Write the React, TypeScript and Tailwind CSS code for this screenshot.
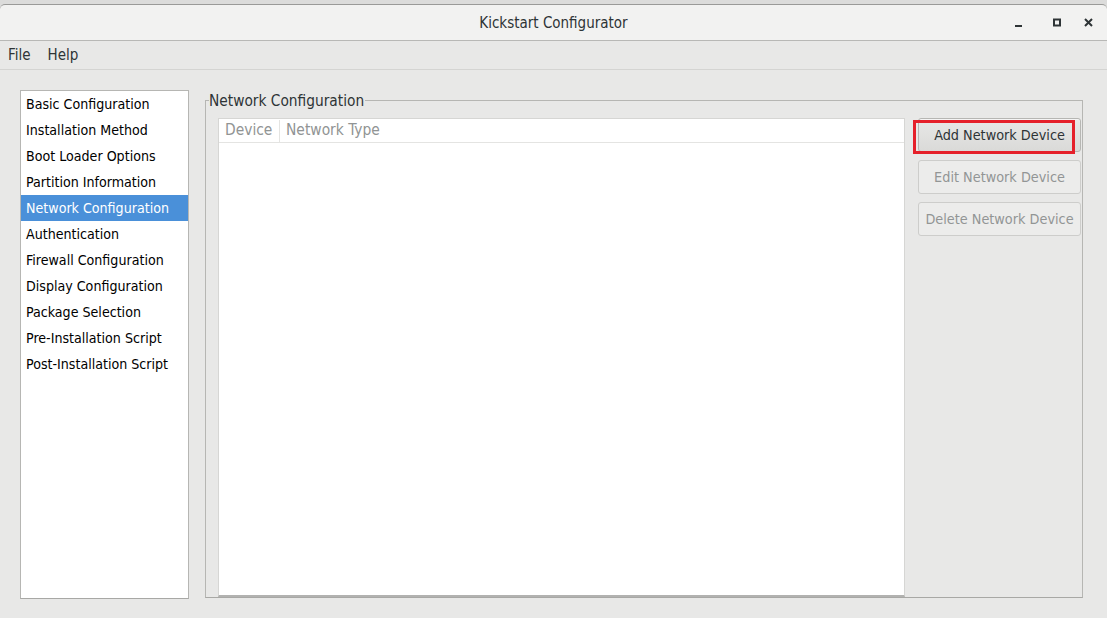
const sections = [
  "Basic Configuration",
  "Installation Method",
  "Boot Loader Options",
  "Partition Information",
  "Network Configuration",
  "Authentication",
  "Firewall Configuration",
  "Display Configuration",
  "Package Selection",
  "Pre-Installation Script",
  "Post-Installation Script",
];

export default function App() {
  const selected = "Network Configuration";

  return (
    <div className="w-[1107px] h-[618px] bg-[#e8e8e7] flex flex-col overflow-hidden text-[#2e3436] font-['DejaVu_Sans_Condensed','DejaVu_Sans',sans-serif] text-[14.1px]">
      {/* title bar */}
      <div className="pt-[4px] bg-[#dcdcdb]">
        <div className="h-[37px] bg-[#f2f2f1] border-t border-[#9a9a98] border-b border-b-[#b8b8b6] rounded-t-[5px] flex items-center relative">
          <div className="flex-1 text-center pt-[1px] text-[15px] text-[#2e3436]">
            Kickstart Configurator
          </div>
          <div className="absolute right-0 top-0 h-full flex items-center">
            <svg width="40" height="12" viewBox="0 0 40 12" className="mr-[4px]">
              <rect x="16" y="8" width="7" height="2" fill="#2e3436" />
            </svg>
            <svg width="30" height="12" viewBox="0 0 30 12">
              <rect x="11" y="2.5" width="6" height="6" fill="none" stroke="#2e3436" strokeWidth="2" />
            </svg>
            <svg width="34" height="12" viewBox="0 0 34 12">
              <path d="M12 2 L19 9 M19 2 L12 9" stroke="#2e3436" strokeWidth="2" />
            </svg>
          </div>
        </div>
      </div>

      {/* menu bar */}
      <div className="h-[29px] flex items-center gap-[17px] px-[8px] pt-[1px] border-b border-[#d4d4d2] text-[15px]">
        <span>File</span>
        <span>Help</span>
      </div>

      {/* body */}
      <div className="flex-1 flex pl-[20px] pr-[24px] pt-[20px] pb-[19px] gap-[16px]">
        {/* sidebar */}
        <div className="w-[170px] bg-white border border-[#b6b6b3] border-b-[#a8a8a5]">
          {sections.map((s) => (
            <div
              key={s}
              className={`h-[26px] flex items-center px-[5px] pt-[2px] ${
                s === selected ? "bg-[#4a90d9] text-white" : "text-black"
              }`}
            >
              {s}
            </div>
          ))}
        </div>

        {/* frame */}
        <div className="flex-1 relative mt-[10px] mb-[1px] border border-[#b6b6b3] border-b-[#a8a8a5] flex pl-[12px] pr-[1px] pt-[17px]">
          <span className="absolute -top-[8px] left-[3px] bg-[#e8e8e7] pr-[1px] text-[15.3px] leading-[17px] text-[#2e3436]">
            Network Configuration
          </span>

          {/* table */}
          <div className="w-[687px] bg-white border-l border-t border-r border-[#d6d6d4] border-b-2 border-b-[#b2b2b0]">
            <div className="h-[24px] flex items-center pt-[1px] border-b border-[#e4e4e2] text-[#919494] text-[15.4px]">
              <div className="w-[61px] px-[6px] border-r border-[#e4e4e2] h-full flex items-center">Device</div>
              <div className="px-[6px]">Network Type</div>
            </div>
          </div>

          {/* buttons */}
          <div className="flex-1 flex flex-col gap-[8px] pl-[13px] pt-0">
            <div className="relative">
              <button className="w-[163px] h-[34px] pt-[1px] rounded-[3px] border border-[#b6b6b3] bg-gradient-to-b from-[#e8e8e7] to-[#dadad8] text-[14.3px] text-[#2e3436] shadow-[inset_0_1px_0_#f4f4f4]">
                Add Network Device
              </button>
              <div className="absolute left-[-5px] top-[2px] w-[162px] h-[34px] border-[3px] border-[#e5202a] pointer-events-none" />
            </div>
            <button className="w-[163px] h-[34px] pt-[1px] rounded-[3px] border border-[#cdcdcb] bg-[#ececeb] text-[14.3px] text-[#929595]">
              Edit Network Device
            </button>
            <button className="w-[163px] h-[34px] pt-[1px] rounded-[3px] border border-[#cdcdcb] bg-[#ececeb] text-[14.3px] text-[#929595]">
              Delete Network Device
            </button>
          </div>
        </div>
      </div>
    </div>
  );
}
